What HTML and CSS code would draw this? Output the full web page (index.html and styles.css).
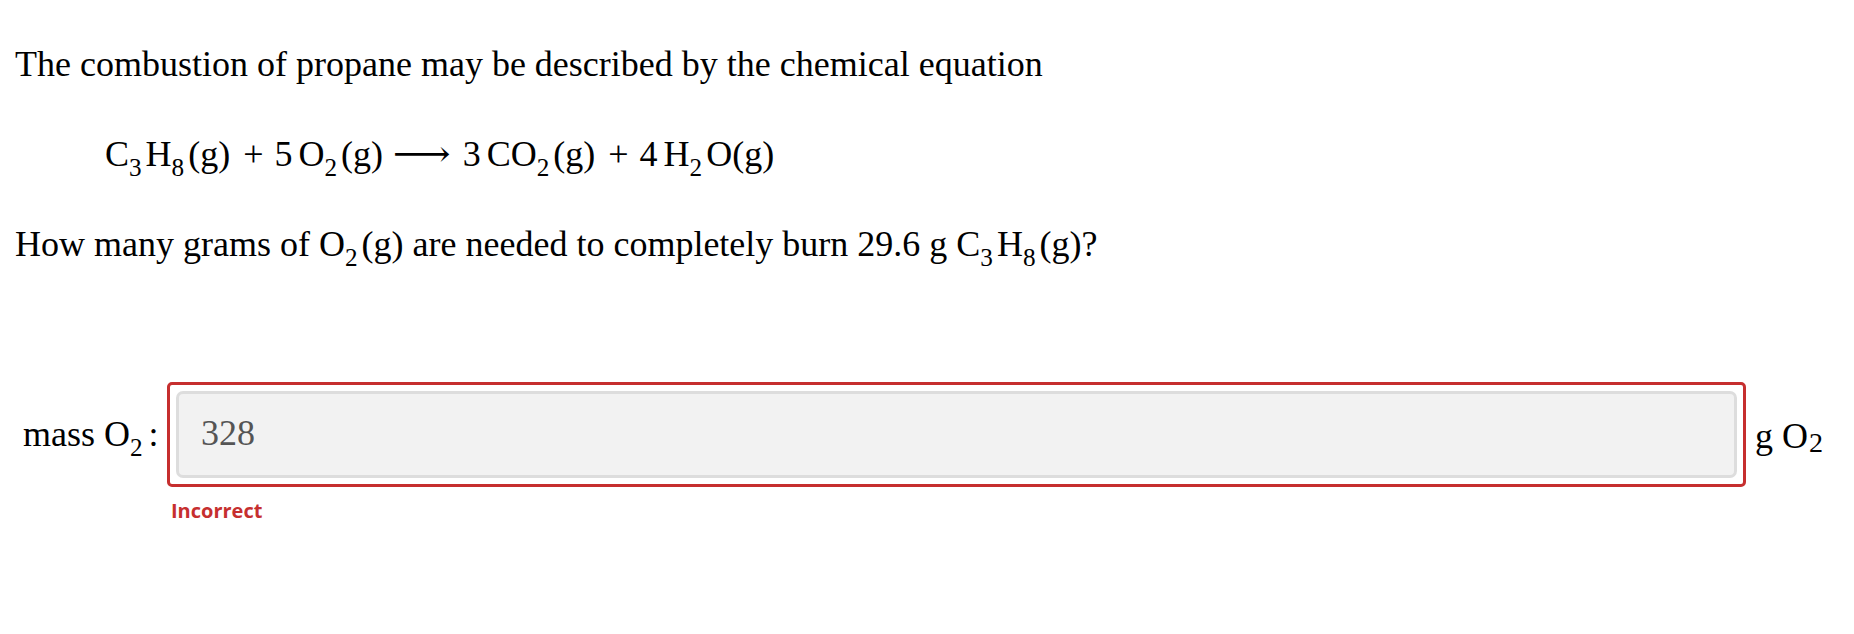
FILE: index.html
```html
<!DOCTYPE html>
<html lang="en">
<head>
<meta charset="utf-8">
<title>Combustion of propane</title>
<link rel="stylesheet" href="styles.css">
</head>
<body>
<div class="question">
  <p class="line intro">The combustion of propane may be described by the chemical equation</p>
  <div class="line equation">C<sub>3</sub>H<sub>8</sub>(g)<span class="op">+</span>5<span class="sp"></span>O<sub>2</sub>(g)<span class="arrow">⟶</span>3<span class="sp"></span>CO<sub>2</sub>(g)<span class="op">+</span>4<span class="sp"></span>H<sub>2</sub>O(g)</div>
  <p class="line ask">How many grams of O<sub>2</sub>(g) are needed to completely burn 29.6 g C<sub>3</sub>H<sub>8</sub>(g)?</p>
  <div class="answer-row">
    <label class="answer-label" for="mass">mass O<sub>2</sub>:</label>
    <div class="field">
      <div class="field-box">
        <input id="mass" class="field-input" type="text" value="328">
      </div>
      <div class="feedback">Incorrect</div>
    </div>
    <span class="unit">g O<span class="unit-sub">2</span></span>
  </div>
</div>
</body>
</html>
```
FILE: styles.css
```css
html, body {
  margin: 0;
  padding: 0;
  background: #ffffff;
}
body {
  font-family: "Liberation Serif", "Times New Roman", serif;
  font-size: 36px;
  color: #000;
}
.question {
  padding: 44px 0 0 15px;
}
.line {
  margin: 0;
  line-height: 40px;
  white-space: nowrap;
}
.equation {
  margin-top: 50px;
  padding-left: 90px;
}
.ask {
  margin-top: 50px;
}
sub {
  font-size: 0.7em;
  vertical-align: -0.38em;
  line-height: 0;
  margin-right: 4px;
}
.sp {
  display: inline-block;
  width: 6px;
}
.op {
  display: inline-block;
  padding: 0 11px 0 13px;
}
.arrow {
  display: inline-block;
  padding: 0 15px 0 13px;
  font-family: "DejaVu Serif", serif;
  font-size: 36px;
  transform: scaleX(1.12);
}
.answer-row {
  display: flex;
  align-items: flex-start;
  margin-top: 118px;
  padding-left: 8px;
}
.answer-label {
  line-height: 40px;
  margin-top: 32px;
  width: 144px;
  flex: none;
}
.answer-label sub {
  margin-right: 6px;
}
.field {
  flex: 1;
  display: flex;
  flex-direction: column;
}
.field-box {
  border: 3px solid #c62f2f;
  border-radius: 5px;
  padding: 6px 6px;
}
.field-input {
  box-sizing: border-box;
  width: 100%;
  height: 87px;
  margin: 0;
  border: 3px solid #dddddd;
  border-radius: 7px;
  background: #f2f2f2;
  padding: 0 0 4px 22px;
  font-family: "Liberation Serif", "Times New Roman", serif;
  font-size: 36px;
  color: #555555;
  outline: none;
}
.feedback {
  margin-top: 10px;
  padding-left: 4px;
  font-family: "Open Sans", "Liberation Sans", sans-serif;
  font-weight: 700;
  font-size: 20px;
  line-height: 28px;
  color: #c62f2f;
}
.unit {
  flex: none;
  width: 108px;
  padding-left: 9px;
  line-height: 40px;
  margin-top: 34px;
  box-sizing: border-box;
}
.unit-sub {
  font-size: 0.78em;
  vertical-align: -0.14em;
  line-height: 0;
  margin-left: 1px;
}
```
